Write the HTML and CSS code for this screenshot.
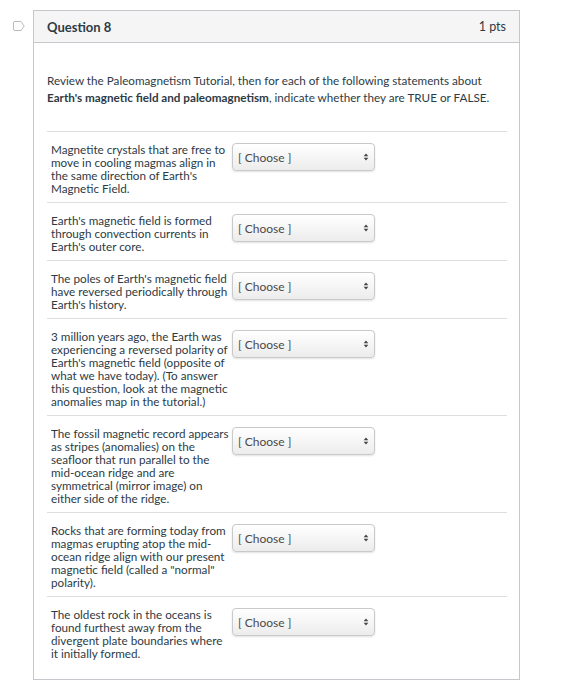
FILE: index.html
```html
<!DOCTYPE html>
<html>
<head>
<meta charset="utf-8">
<link rel="stylesheet" href="styles.css">
</head>
<body>
<div class="page">
  <svg class="flag" width="12" height="10" viewBox="0 0 12 10"><path d="M2 0.5 H8 L11.2 5 L8 9.5 H2 Q0.5 9.5 0.5 8 V2 Q0.5 0.5 2 0.5 Z" fill="none" stroke="#b8bcc0" stroke-width="1"/></svg>
  <div class="card">
    <div class="card-head">
      <span class="q-title">Question 8</span>
      <span class="q-pts">1 pts</span>
    </div>
    <div class="card-body">
      <p class="intro">Review the Paleomagnetism Tutorial, then for each of the following statements about <strong>Earth's magnetic field and paleomagnetism</strong>, indicate whether they are TRUE or FALSE.</p>
      <div class="rows">
        <div class="row">
          <div class="stmt">Magnetite crystals that are free to move in cooling magmas align in the same direction of Earth's Magnetic Field.</div>
          <div class="sel"><span>[ Choose ]</span><svg class="arr" width="6" height="10" viewBox="0 0 6 10"><path d="M3 1.5 L5.3 4.2 H0.7 Z M3 8.5 L5.3 5.8 H0.7 Z" fill="#444"/></svg></div>
        </div>
        <div class="row">
          <div class="stmt">Earth's magnetic field is formed through convection currents in Earth's outer core.</div>
          <div class="sel"><span>[ Choose ]</span><svg class="arr" width="6" height="10" viewBox="0 0 6 10"><path d="M3 1.5 L5.3 4.2 H0.7 Z M3 8.5 L5.3 5.8 H0.7 Z" fill="#444"/></svg></div>
        </div>
        <div class="row">
          <div class="stmt">The poles of Earth's magnetic field have reversed periodically through Earth's history.</div>
          <div class="sel"><span>[ Choose ]</span><svg class="arr" width="6" height="10" viewBox="0 0 6 10"><path d="M3 1.5 L5.3 4.2 H0.7 Z M3 8.5 L5.3 5.8 H0.7 Z" fill="#444"/></svg></div>
        </div>
        <div class="row">
          <div class="stmt">3 million years ago, the Earth was experiencing a reversed polarity of Earth's magnetic field (opposite of what we have today). (To answer this question, look at the magnetic anomalies map in the tutorial.)</div>
          <div class="sel"><span>[ Choose ]</span><svg class="arr" width="6" height="10" viewBox="0 0 6 10"><path d="M3 1.5 L5.3 4.2 H0.7 Z M3 8.5 L5.3 5.8 H0.7 Z" fill="#444"/></svg></div>
        </div>
        <div class="row">
          <div class="stmt">The fossil magnetic record appears as stripes (anomalies) on the seafloor that run parallel to the mid-ocean ridge and are symmetrical (mirror image) on either side of the ridge.</div>
          <div class="sel"><span>[ Choose ]</span><svg class="arr" width="6" height="10" viewBox="0 0 6 10"><path d="M3 1.5 L5.3 4.2 H0.7 Z M3 8.5 L5.3 5.8 H0.7 Z" fill="#444"/></svg></div>
        </div>
        <div class="row">
          <div class="stmt">Rocks that are forming today from magmas erupting atop the mid-ocean ridge align with our present magnetic field (called a "normal" polarity).</div>
          <div class="sel"><span>[ Choose ]</span><svg class="arr" width="6" height="10" viewBox="0 0 6 10"><path d="M3 1.5 L5.3 4.2 H0.7 Z M3 8.5 L5.3 5.8 H0.7 Z" fill="#444"/></svg></div>
        </div>
        <div class="row">
          <div class="stmt">The oldest rock in the oceans is found furthest away from the divergent plate boundaries where it initially formed.</div>
          <div class="sel"><span>[ Choose ]</span><svg class="arr" width="6" height="10" viewBox="0 0 6 10"><path d="M3 1.5 L5.3 4.2 H0.7 Z M3 8.5 L5.3 5.8 H0.7 Z" fill="#444"/></svg></div>
        </div>
      </div>
    </div>
  </div>
</div>
</body>
</html>
```
FILE: styles.css
```css
html, body {
  margin: 0;
  padding: 0;
  background: #fff;
}
body {
  font-family: Lato, "Liberation Sans", sans-serif;
  color: #2d3b45;
}
.page {
  display: flex;
  align-items: flex-start;
  padding: 10px 0 0 13px;
}
.flag {
  margin-top: 11px;
  margin-right: 8px;
  flex: none;
}
.card {
  width: 485px;
  border: 1px solid #c4c8cc;
  background: #fff;
}
.card-head {
  height: 31px;
  background: #f5f5f5;
  border-bottom: 1px solid #c4c8cc;
  display: flex;
  align-items: center;
  justify-content: space-between;
  padding: 0 13px;
}
.q-title {
  font-weight: 700;
  font-size: 13px;
}
.q-pts {
  font-size: 12.5px;
}
.card-body {
  padding: 29px 12px 12px 13px;
}
.intro {
  margin: 0 0 25px;
  font-size: 11.7px;
  line-height: 17px;
}
.rows {
  border-top: 1px solid #dcdfe2;
}
.row {
  display: grid;
  grid-template-columns: 180px 143px;
  column-gap: 1px;
  align-items: start;
  padding: 11px 4px 7px;
  border-bottom: 1px solid #dcdfe2;
  font-size: 11.7px;
  line-height: 13px;
}
.row:last-child {
  border-bottom: none;
}
.sel {
  height: 26px;
  border: 1px solid #c9c9c9;
  border-radius: 4px;
  background: linear-gradient(#ffffff, #ececec);
  box-shadow: 0 1px 2px rgba(0,0,0,0.12);
  display: flex;
  align-items: center;
  justify-content: space-between;
  padding: 0 5px 0 5px;
  font-size: 12px;
  color: #4a4a4a;
}
.arr {
  display: block;
}
```
